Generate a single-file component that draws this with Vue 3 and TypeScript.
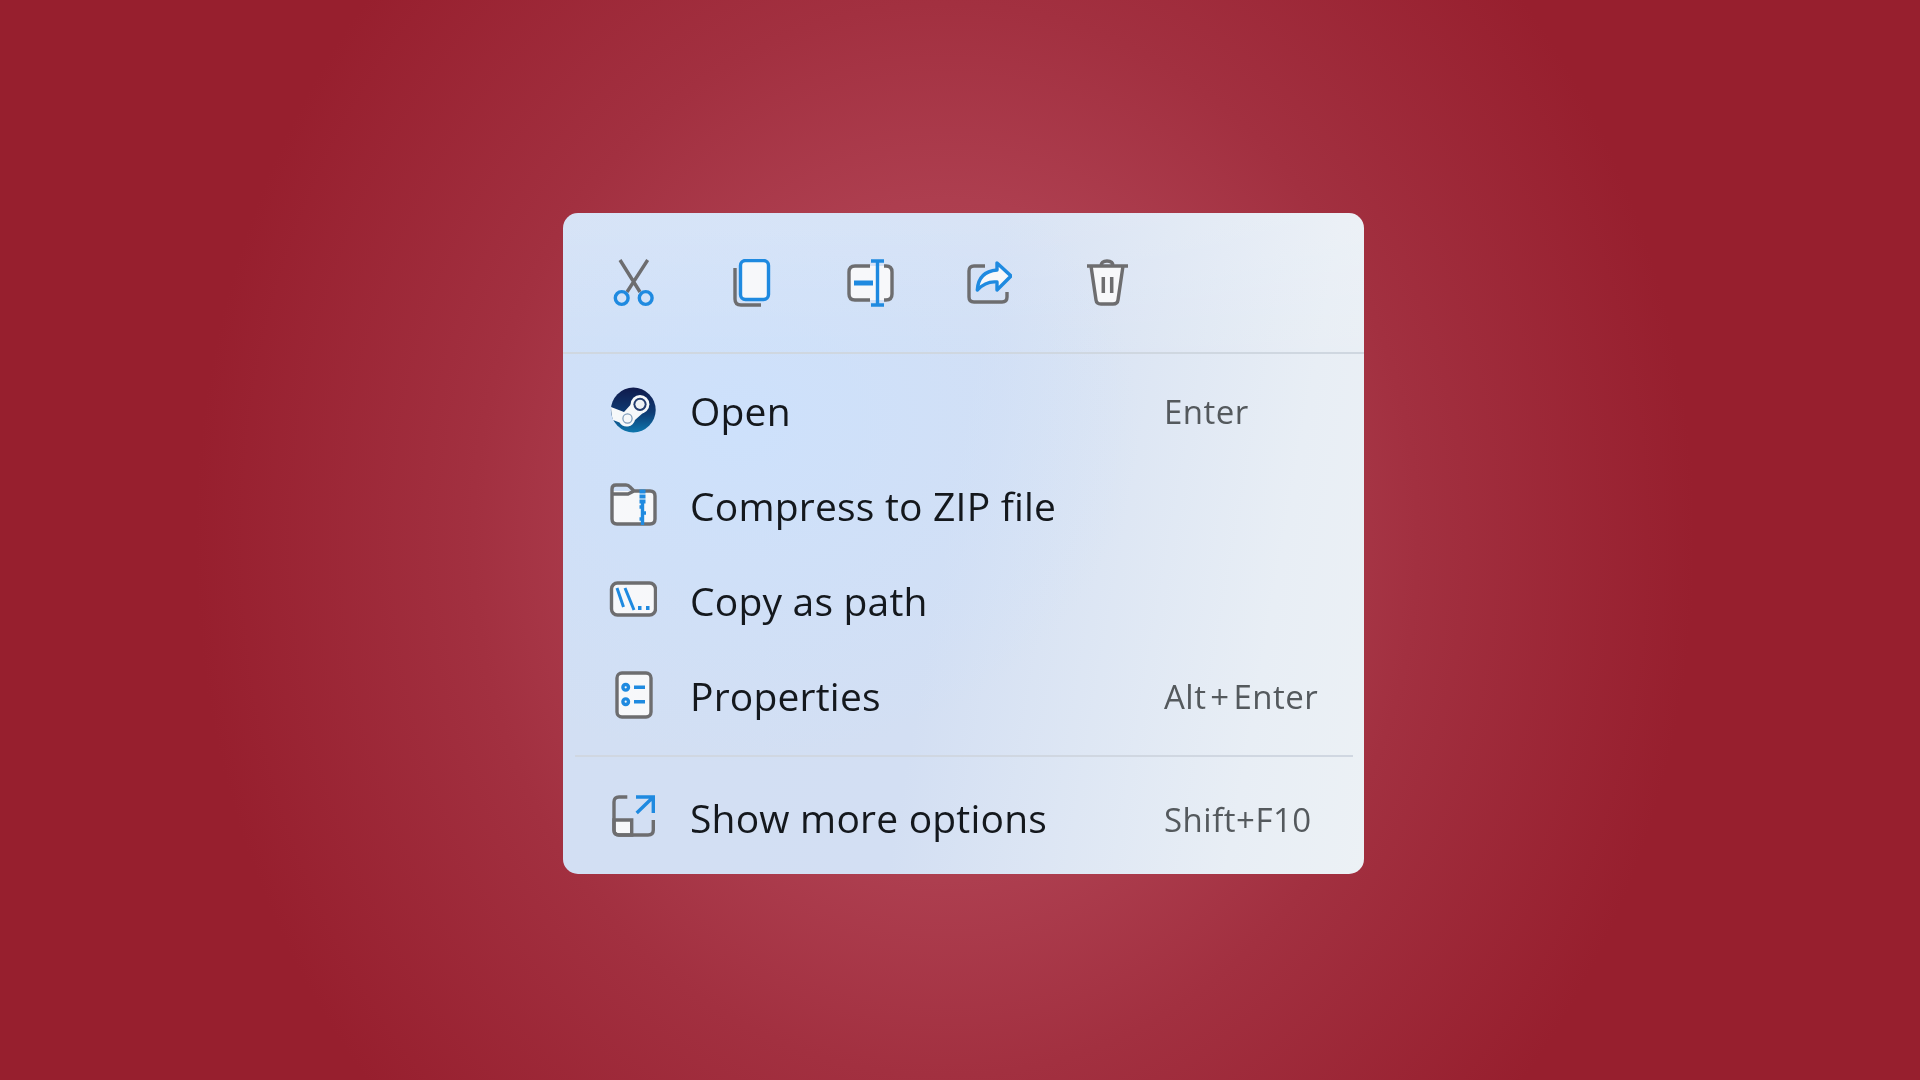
<script setup lang="ts">
interface MenuRow {
  id: string
  label: string
  shortcut?: string
}

const tools = ['cut', 'copy', 'rename', 'share', 'delete']

const rows: MenuRow[] = [
  { id: 'steam', label: 'Open', shortcut: 'Enter' },
  { id: 'zip', label: 'Compress to ZIP file' },
  { id: 'path', label: 'Copy as path' },
  { id: 'props', label: 'Properties', shortcut: 'Alt\u200a+\u200aEnter' },
]
</script>

<template>
  <div class="page">
    <div class="menu">
      <div class="toolbar">
        <div v-for="tool in tools" :key="tool" class="tool">
          <svg class="icon" viewBox="0 0 48 48" :aria-label="tool">
            <g v-if="tool === 'cut'" fill="none" stroke-width="3.400">
              <path class="gray" d="M11 1 31 33M38.700 1 18 33" />
              <circle class="blue" cx="12.700" cy="39" r="6.400" />
              <circle class="blue" cx="36.700" cy="39" r="6.400" />
            </g>
            <g v-else-if="tool === 'copy'" fill="none" stroke-width="3.400">
              <path class="gray" d="M7 9V40Q7 46 13 46H33" />
              <rect class="blue paper" x="12.500" y="1.500" width="28" height="39" rx="5" />
            </g>
            <g v-else-if="tool === 'rename'" fill="none" stroke-width="3.400">
              <rect class="paper" x="3" y="7" width="43" height="34" rx="6" />
              <path class="gray" d="M24 7H9Q3 7 3 13V35Q3 41 9 41H24M38 7H40Q46 7 46 13V35Q46 41 40 41H38" />
              <path class="blue" d="M31.500 2V46M25 2H38M25 46H38" />
              <path class="blue" stroke-width="5" d="M8 24H27" />
            </g>
            <g v-else-if="tool === 'share'" fill="none" stroke-width="3.400">
              <path class="gray" d="M21 7H10Q5 7 5 12V38Q5 43 10 43H38Q43 43 43 38V33" />
              <path class="blue paper" stroke-linejoin="round" d="M47 17 33 4V11C20 12 14 20 13.300 31 19 25 25 22 33 23V31Z" />
            </g>
            <g v-else fill="none" stroke-width="3.400">
              <path class="paper" d="M8 7 13 41Q13.500 45 18 45H30Q34.500 45 35 41L40 7Z" />
              <path class="gray" d="M4 7H45M8 7 13 41Q13.500 45 18 45H30Q34.500 45 35 41L40 7M18 7Q18 2 24 2 30 2 30 7" />
              <path class="gray" stroke-width="3.500" d="M20.300 18V34M28.700 18V34" />
            </g>
          </svg>
        </div>
      </div>

      <div class="list">
        <div v-for="row in rows" :key="row.id" class="row">
          <svg class="icon" viewBox="0 0 48 48">
            <g v-if="row.id === 'steam'">
              <defs>
                <linearGradient id="steam-fill" x1="0" y1="0" x2="0" y2="1">
                  <stop offset="0" stop-color="#101a4c" />
                  <stop offset="0.55" stop-color="#0e3a72" />
                  <stop offset="1" stop-color="#0d76ad" />
                </linearGradient>
              </defs>
              <circle cx="24.300" cy="24" r="22.400" fill="url(#steam-fill)" />
              <path fill="#f6f8fa" d="M2 21 15 26 25 15 35 26 26 34A8.500 8.500 0 0 1 10.500 36.500L4 34Q2.200 29 2 21Z" />
              <circle cx="31" cy="18.300" r="9.400" fill="#f6f8fa" />
              <circle cx="31" cy="18.300" r="6.600" fill="#233c6f" />
              <circle cx="31" cy="18.300" r="4.600" fill="#eef1f5" />
              <circle cx="18.500" cy="32.500" r="4.600" fill="#f6f8fa" stroke="#7d9ab8" stroke-width="1.200" />
            </g>
            <g v-else-if="row.id === 'zip'" fill="none" stroke-width="3.400">
              <path class="paper" d="M3 10H46V39Q46 43 42 43H7Q3 43 3 39Z" />
              <path class="gray" d="M3 38V8Q3 4 7 4H17Q19.500 4 21 6L25 10H41Q46 10 46 15V38Q46 43 41 43H8Q3 43 3 38ZM3 13H19L25 10" />
              <path class="blue" stroke-width="4" d="M30.500 10.500H36.500M30.500 15.500H36.500M30.500 20.500H36.500" />
              <path class="blue" d="M33.500 21V44M30.500 26H34M33.500 32H37M30.500 38H34" />
            </g>
            <g v-else-if="row.id === 'path'" fill="none" stroke-width="3.400">
              <rect class="paper gray" x="2.500" y="7" width="44" height="32" rx="6" />
              <path class="blue" stroke-width="3" d="M8 12 14.500 31M16 12 25 34" />
              <path class="blue" stroke-width="3.800" d="M29 32H32.500M37 32H40.500" />
            </g>
            <g v-else fill="none" stroke-width="3.400">
              <rect class="paper gray" x="8" y="2" width="34" height="44" rx="5" />
              <circle class="blue" cx="16.700" cy="16.300" r="2.800" />
              <circle class="blue" cx="16.700" cy="30.700" r="2.800" />
              <path class="blue" d="M25 16.300H36M25 30.700H36" />
            </g>
          </svg>
          <span class="label">{{ row.label }}</span>
          <span class="shortcut">{{ row.shortcut }}</span>
        </div>
      </div>

      <div class="divider"></div>

      <div class="row">
        <svg class="icon" viewBox="0 0 48 48" fill="none" stroke-width="3.400">
          <path class="gray paper" d="M5 26H22.700V41H10Q5 41 5 36Z" />
          <path class="gray" d="M18.300 3H10Q5 3 5 8V36Q5 41 10 41H39Q44.300 41 44.300 36V26" />
          <path class="blue" d="M27 3H44.300V19M44.300 3 27.700 19" />
        </svg>
        <span class="label last">Show more options</span>
        <span class="shortcut">Shift+F10</span>
      </div>
    </div>
  </div>
</template>

<style>
html,
body {
  margin: 0;
  height: 100%;
}
</style>

<style scoped>
.page {
  box-sizing: border-box;
  width: 1920px;
  height: 1080px;
  padding: 213px 0 0 563px;
  overflow: hidden;
  background: radial-gradient(ellipse 750px 850px at 945px 540px, #bc5058 0%, #ad3e4f 40%, #a23040 63%, #971f2e 100%);
  font-family: 'Open Sans', 'Noto Sans', sans-serif;
}

.menu {
  width: 801px;
  height: 661px;
  box-sizing: border-box;
  border-radius: 15px;
  overflow: hidden;
  background:
    linear-gradient(180deg, rgba(255, 255, 255, 0.14) 0%, rgba(255, 255, 255, 0) 24%),
    radial-gradient(ellipse 400px 340px at 22% 32%, rgba(205, 225, 252, 0.95), rgba(205, 225, 252, 0) 100%),
    linear-gradient(100deg, #d2dff3 0%, #d3dff3 48%, #e8eef5 85%, #ecf1f5 100%);
}

.toolbar {
  display: flex;
  box-sizing: border-box;
  height: 141px;
  padding: 46px 0 0 11px;
  border-bottom: 2px solid #cfd7e0;
}

.tool {
  width: 118.400px;
  display: flex;
  justify-content: center;
}

.icon {
  width: 48px;
  height: 48px;
  flex: none;
  filter: blur(0.6px);
}

.list {
  display: flex;
  flex-direction: column;
  gap: 23px;
  margin-top: 20px;
}

.row {
  display: flex;
  align-items: center;
  height: 72px;
  padding-left: 46px;
}

.label {
  flex: 1;
  margin-left: 33px;
  font-size: 39px;
  letter-spacing: 0.2px;
  color: #14181d;
  filter: blur(0.4px);
}

.label.last {
  margin-top: -2px;
}

.shortcut {
  width: 200px;
  margin-top: 3px;
  font-size: 33px;
  letter-spacing: 0.5px;
  color: #54595d;
  filter: blur(0.4px);
}

.divider {
  height: 2px;
  margin: 24px 11px 25px 12px;
  background: #d0d7e1;
}

.gray {
  stroke: #6d6d6f;
}

.blue {
  stroke: #1f8ae0;
}

.paper {
  fill: #f7f8fa;
}
</style>
